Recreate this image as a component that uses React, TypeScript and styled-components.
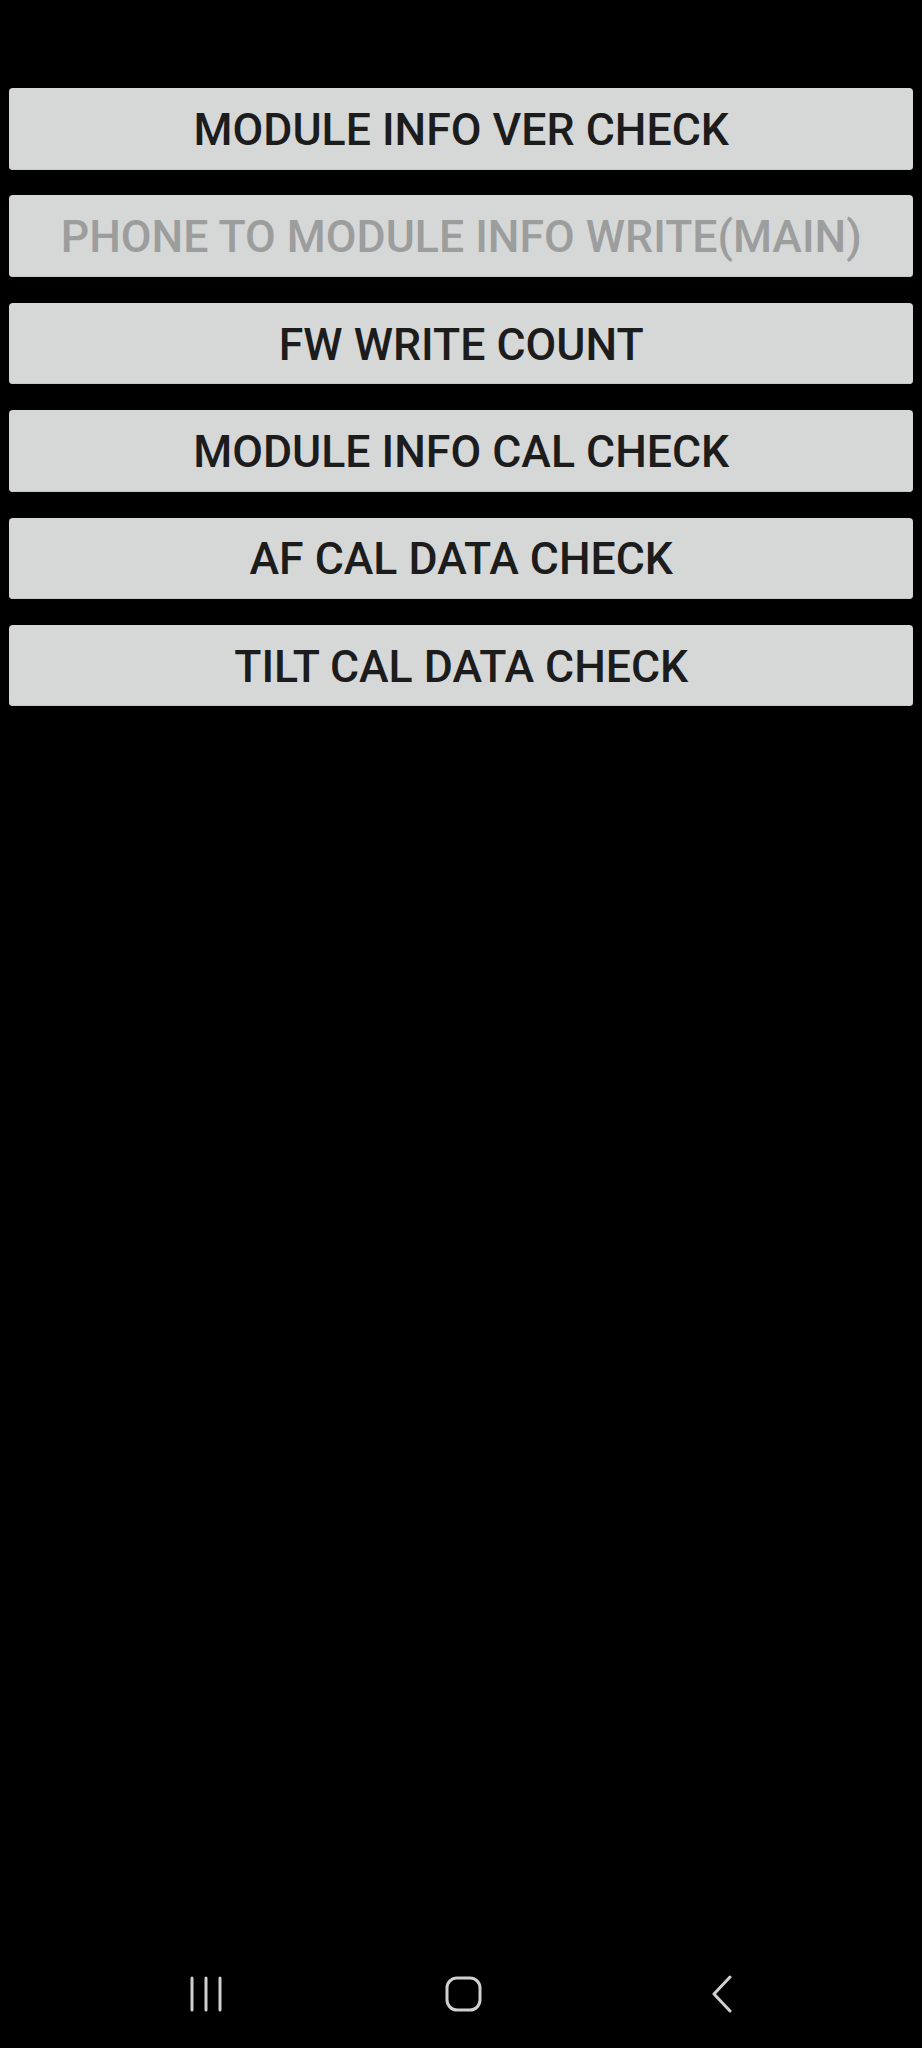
import React from "react";
import styled, { createGlobalStyle } from "styled-components";

const Global = createGlobalStyle`
  html, body { margin: 0; padding: 0; background: #000; }
  #root { min-height: 2048px; }
`;

const Screen = styled.div`
  height: 2048px;
  background: #000;
  display: flex;
  flex-direction: column;
  font-family: Roboto, "Liberation Sans", sans-serif;
`;

const List = styled.div`
  flex: 1;
  display: flex;
  flex-direction: column;
  gap: 25.9px;
  padding: 88px 9px 0 8.5px;
`;

const Button = styled.button<{ $disabled?: boolean }>`
  height: 81.5px;
  width: 100%;
  border: none;
  border-radius: 4px;
  background: #d6d7d7;
  box-shadow: inset 0 -1px 0 #c6c7c7;
  color: ${(p) => (p.$disabled ? "#9c9d9d" : "#1c1c1c")};
  font-family: Roboto, "Liberation Sans", sans-serif;
  font-size: 44.6px;
  font-weight: 500;
  letter-spacing: 0;
  display: flex;
  align-items: center;
  justify-content: center;
  padding: 2px 0 0 1px;
  margin: 0;
`;

const NavBar = styled.div`
  height: 108px;
  display: flex;
  align-items: center;
  padding-left: 77px;
`;

const NavSlot = styled.div`
  width: 258px;
  display: flex;
  justify-content: center;
  align-items: center;
`;

const items: { label: string; disabled?: boolean }[] = [
  { label: "MODULE INFO VER CHECK" },
  { label: "PHONE TO MODULE INFO WRITE(MAIN)", disabled: true },
  { label: "FW WRITE COUNT" },
  { label: "MODULE INFO CAL CHECK" },
  { label: "AF CAL DATA CHECK" },
  { label: "TILT CAL DATA CHECK" },
];

export default function App() {
  return (
    <>
      <Global />
      <Screen>
        <List>
          {items.map((it) => (
            <Button key={it.label} $disabled={it.disabled}>
              {it.label}
            </Button>
          ))}
        </List>
        <NavBar>
          <NavSlot>
            <svg width="32" height="36" viewBox="0 0 32 36">
              <g stroke="#d0d0d0" strokeWidth="3" strokeLinecap="round">
                <line x1="2" y1="2" x2="2" y2="34" />
                <line x1="16" y1="2" x2="16" y2="34" />
                <line x1="30" y1="2" x2="30" y2="34" />
              </g>
            </svg>
          </NavSlot>
          <NavSlot>
            <svg width="38" height="36" viewBox="0 0 38 36">
              <rect x="2" y="2" width="33" height="32" rx="10" fill="none" stroke="#d0d0d0" strokeWidth="3" />
            </svg>
          </NavSlot>
          <NavSlot>
            <svg width="22" height="38" viewBox="0 0 22 38">
              <polyline points="19,2 3,19 19,36" fill="none" stroke="#d0d0d0" strokeWidth="3" strokeLinecap="round" strokeLinejoin="round" />
            </svg>
          </NavSlot>
        </NavBar>
      </Screen>
    </>
  );
}
